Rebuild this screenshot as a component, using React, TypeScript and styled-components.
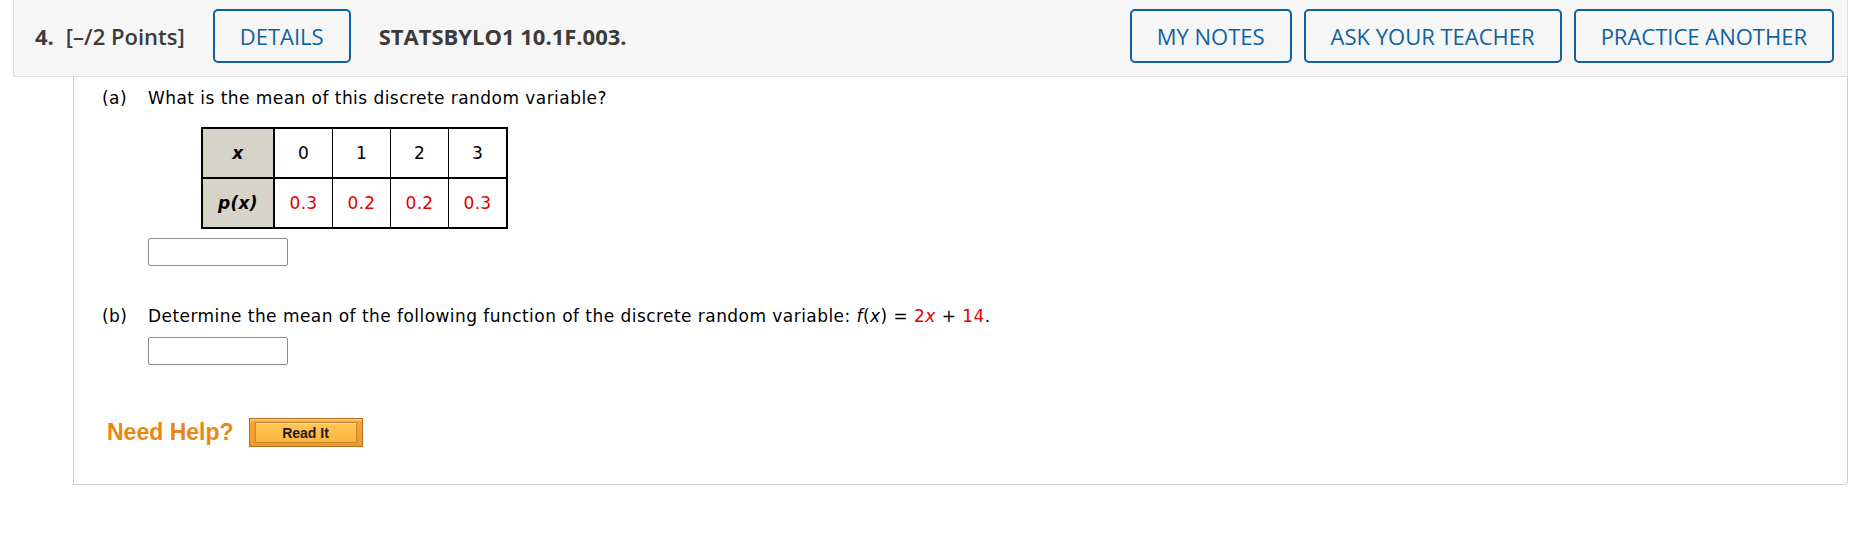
import React from "react";
import styled, { createGlobalStyle } from "styled-components";

const Global = createGlobalStyle`
  html, body { margin: 0; padding: 0; background: #ffffff; }
  body { font-family: "DejaVu Sans", Verdana, sans-serif; color: #000; }
`;

const Page = styled.div`
  padding: 0 8px 0 13px;
`;

const Header = styled.header`
  display: flex;
  align-items: center;
  box-sizing: border-box;
  height: 77px;
  padding: 9px 13px 13px 21px;
  background: #f6f6f6;
  border: 1px solid #dddddd;
  border-top: none;
  font-family: "Open Sans", "Noto Sans", sans-serif;
  color: #3b3b3b;
`;

const Num = styled.span`
  font-size: 22px;
  font-weight: 700;
  margin-right: 12px;
`;

const Points = styled.span`
  font-size: 22px;
  font-weight: 600;
  margin-right: 28px;
`;

const Code = styled.span`
  font-size: 22px;
  font-weight: 700;
  margin-left: 28px;
`;

const Spacer = styled.div`
  flex: 1;
`;

const ActionGroup = styled.div`
  display: flex;
  gap: 12px;
`;

const OutlineButton = styled.button`
  box-sizing: border-box;
  height: 54px;
  padding: 0 25px;
  background: transparent;
  border: 2px solid #0f62a0;
  border-radius: 5px;
  color: #0f62a0;
  font-family: "Open Sans", "Noto Sans", sans-serif;
  font-size: 22px;
  font-weight: 400;
  cursor: pointer;
`;

const Body = styled.section`
  box-sizing: border-box;
  margin-left: 60px;
  height: 408px;
  border: 1px solid #cfcfcf;
  border-top: none;
  border-bottom-right-radius: 4px;
  padding: 11px 0 0 28px;
  font-size: 17px;
  letter-spacing: 0.45px;
`;

const QuestionRow = styled.div<{ $top: number }>`
  display: flex;
  align-items: center;
  height: 20px;
  line-height: 20px;
  margin-top: ${(p) => p.$top}px;
  white-space: nowrap;
`;

const PartLabel = styled.span`
  width: 46px;
  flex: none;
`;

const Red = styled.span`
  color: #e20000;
`;

const Ital = styled.i`
  font-style: italic;
`;

const Indent = styled.div<{ $top: number; $left?: number }>`
  margin-top: ${(p) => p.$top}px;
  margin-left: ${(p) => 46 + (p.$left ?? 0)}px;
`;

const Table = styled.table`
  border-collapse: separate;
  border-spacing: 0;
  table-layout: fixed;
  border: 2px solid #000;
  letter-spacing: 0.3px;
`;

const Head = styled.th<{ $last?: boolean }>`
  box-sizing: border-box;
  width: 72px;
  height: ${(p) => (p.$last ? 48 : 50)}px;
  padding: 0;
  background: #d6d3c9;
  border-right: 2px solid #000;
  border-bottom: ${(p) => (p.$last ? "none" : "2px solid #000")};
  font-weight: 700;
  font-style: italic;
  font-size: 17px;
  text-align: center;
`;

const Cell = styled.td<{ $last?: boolean; $lastRow?: boolean; $red?: boolean }>`
  box-sizing: border-box;
  width: ${(p) => (p.$last ? 57 : 58)}px;
  height: ${(p) => (p.$lastRow ? 48 : 50)}px;
  padding: 0;
  border-right: ${(p) => (p.$last ? "none" : "1px solid #000")};
  border-bottom: ${(p) => (p.$lastRow ? "none" : "2px solid #000")};
  text-align: center;
  font-size: 17px;
  color: ${(p) => (p.$red ? "#e20000" : "#000")};
`;

const AnswerBox = styled.input`
  display: block;
  box-sizing: border-box;
  width: 140px;
  height: 28px;
  border: 1px solid #8c8c8c;
  border-radius: 2px;
  background: #fff;
  padding: 0 4px;
  font-size: 14px;
`;

const HelpRow = styled.div`
  display: flex;
  align-items: center;
  gap: 15px;
  margin-top: 53px;
  margin-left: 5px;
  height: 29px;
  letter-spacing: 0;
`;

const HelpText = styled.span`
  font-family: "Liberation Sans", Arial, sans-serif;
  font-weight: 700;
  font-size: 23px;
  color: #eb8612;
`;

const ReadIt = styled.button`
  box-sizing: border-box;
  width: 114px;
  height: 29px;
  padding: 3px 5px 3px 5px;
  border: 1px solid #b9701c;
  background: linear-gradient(#fbd08a 0, #f3a33a 3px, #f09a2e 100%);
  cursor: pointer;
  display: flex;
`;

const ReadItFace = styled.span`
  flex: 1;
  display: flex;
  align-items: center;
  justify-content: center;
  border: 1px solid #c7862c;
  box-shadow: inset 0 1px 0 #ffe2a6;
  background: linear-gradient(#ffc659, #fdb53d);
  font-family: "Liberation Sans", Arial, sans-serif;
  font-weight: 700;
  font-size: 14px;
  color: #1c1c1c;
`;

const xs = ["0", "1", "2", "3"];
const ps = ["0.3", "0.2", "0.2", "0.3"];

export default function App() {
  return (
    <Page>
      <Global />
      <Header>
        <Num>4.</Num>
        <Points>[–/2 Points]</Points>
        <OutlineButton>DETAILS</OutlineButton>
        <Code>STATSBYLO1 10.1F.003.</Code>
        <Spacer />
        <ActionGroup>
          <OutlineButton>MY NOTES</OutlineButton>
          <OutlineButton>ASK YOUR TEACHER</OutlineButton>
          <OutlineButton>PRACTICE ANOTHER</OutlineButton>
        </ActionGroup>
      </Header>
      <Body>
        <QuestionRow $top={0}>
          <PartLabel>(a)</PartLabel>
          <span>What is the mean of this discrete random variable?</span>
        </QuestionRow>
        <Indent $top={19} $left={53}>
          <Table>
            <tbody>
              <tr>
                <Head>x</Head>
                {xs.map((v, i) => (
                  <Cell key={v} $last={i === xs.length - 1}>
                    {v}
                  </Cell>
                ))}
              </tr>
              <tr>
                <Head $last>p(x)</Head>
                {ps.map((v, i) => (
                  <Cell key={i} $red $lastRow $last={i === ps.length - 1}>
                    {v}
                  </Cell>
                ))}
              </tr>
            </tbody>
          </Table>
        </Indent>
        <Indent $top={9}>
          <AnswerBox type="text" aria-label="answer a" />
        </Indent>
        <QuestionRow $top={40}>
          <PartLabel>(b)</PartLabel>
          <span>
            Determine the mean of the following function of the discrete random variable:{" "}
            <Ital>f</Ital>(<Ital>x</Ital>) = <Red>2<Ital>x</Ital></Red> + <Red>14</Red>.
          </span>
        </QuestionRow>
        <Indent $top={11}>
          <AnswerBox type="text" aria-label="answer b" />
        </Indent>
        <HelpRow>
          <HelpText>Need Help?</HelpText>
          <ReadIt>
            <ReadItFace>Read It</ReadItFace>
          </ReadIt>
        </HelpRow>
      </Body>
    </Page>
  );
}
